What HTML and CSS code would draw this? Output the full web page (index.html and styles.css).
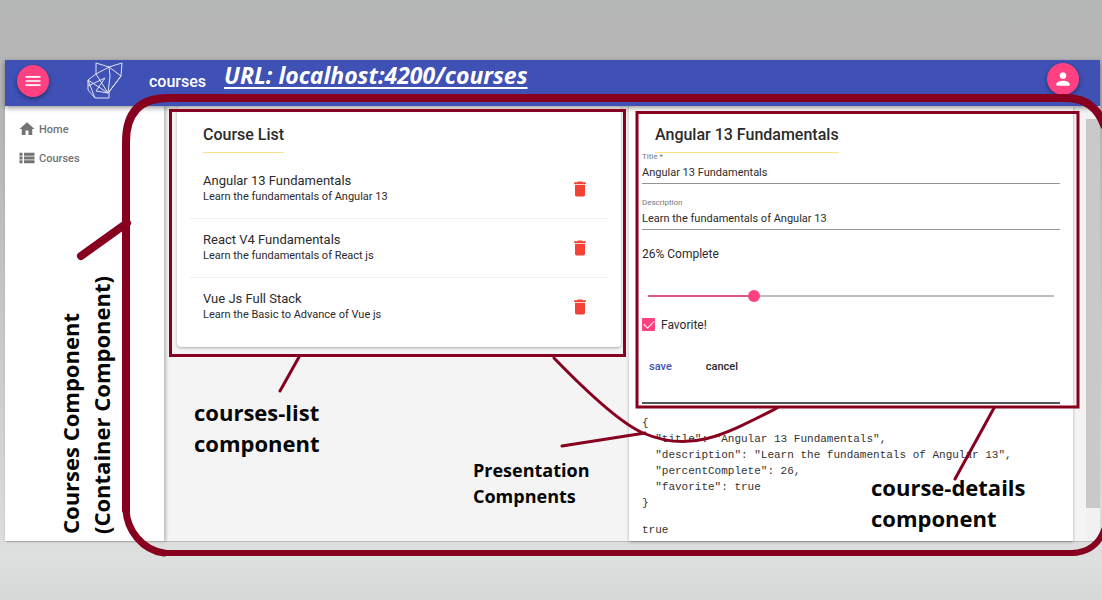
FILE: index.html
```html
<!DOCTYPE html>
<html lang="en">
<head>
<meta charset="utf-8">
<title>Courses</title>
<link rel="stylesheet" href="styles.css">
</head>
<body>
<div class="stage">
  <div class="app">
    <header class="toolbar">
      <button class="fab" type="button" aria-label="Menu">
        <svg viewBox="0 0 24 24" width="20" height="20"><path fill="currentColor" d="M3 18h18v-2H3v2zm0-5h18v-2H3v2zm0-7v2h18V6H3z"/></svg>
      </button>
      <svg class="logo" viewBox="0 0 36 38" width="36" height="38" fill="none" stroke="#dfe3f7" stroke-width="1" stroke-linejoin="round">
        <path d="M9 1 22 5 35 1 34 14 22 30 22 36 8 36 1 28 1 18 9 12Z"/>
        <path d="M9 12 22 5 34 14M22 5 23 14 21 31M9 12 21 31 1 18M34 14 21 31M1 18 8 36M1 24 18 16M21 31 9 29 18 16"/>
      </svg>
      <span class="page-name">courses</span>
      <a class="url" href="#">URL: localhost:4200/courses</a>
      <button class="fab fab-end" type="button" aria-label="Account">
        <svg viewBox="0 0 24 24" width="20" height="20"><path fill="currentColor" d="M12 12c2.210 0 4-1.790 4-4s-1.790-4-4-4-4 1.790-4 4 1.790 4 4 4zm0 2c-2.670 0-8 1.340-8 4v2h16v-2c0-2.660-5.330-4-8-4z"/></svg>
      </button>
    </header>
    <div class="body">
      <nav class="sidebar">
        <a class="nav-link" href="#"><svg viewBox="0 0 24 24" width="18" height="18"><path fill="currentColor" d="M10 20v-6h4v6h5v-8h3L12 3 2 12h3v8z"/></svg>Home</a>
        <a class="nav-link" href="#"><svg viewBox="0 0 24 24" width="18" height="18"><path fill="currentColor" d="M2 5h4v4H2zM8 5h14v4H8zM2 10h4v4H2zM8 10h14v4H8zM2 15h4v4H2zM8 15h14v4H8z"/></svg>Courses</a>
      </nav>
      <main class="content">
        <section class="card list-card">
          <h2 class="card-title">Course List</h2>
          <ul class="courses">
            <li class="course">
              <div class="course-text"><h3 class="course-name">Angular 13 Fundamentals</h3><p class="course-desc">Learn the fundamentals of Angular 13</p></div>
              <button class="delete" type="button" aria-label="Delete Angular 13 Fundamentals"><svg viewBox="0 0 24 24" width="20" height="20"><path fill="currentColor" d="M6 19c0 1.100.9 2 2 2h8c1.100 0 2-.9 2-2V7H6v12zM19 4h-3.500l-1-1h-5l-1 1H5v2h14V4z"/></svg></button>
            </li>
            <li class="course">
              <div class="course-text"><h3 class="course-name">React V4 Fundamentals</h3><p class="course-desc">Learn the fundamentals of React js</p></div>
              <button class="delete" type="button" aria-label="Delete React V4 Fundamentals"><svg viewBox="0 0 24 24" width="20" height="20"><path fill="currentColor" d="M6 19c0 1.100.9 2 2 2h8c1.100 0 2-.9 2-2V7H6v12zM19 4h-3.500l-1-1h-5l-1 1H5v2h14V4z"/></svg></button>
            </li>
            <li class="course">
              <div class="course-text"><h3 class="course-name">Vue Js Full Stack</h3><p class="course-desc">Learn the Basic to Advance of Vue js</p></div>
              <button class="delete" type="button" aria-label="Delete Vue Js Full Stack"><svg viewBox="0 0 24 24" width="20" height="20"><path fill="currentColor" d="M6 19c0 1.100.9 2 2 2h8c1.100 0 2-.9 2-2V7H6v12zM19 4h-3.500l-1-1h-5l-1 1H5v2h14V4z"/></svg></button>
            </li>
          </ul>
        </section>
        <section class="card detail-card">
          <h2 class="card-title">Angular 13 Fundamentals</h2>
          <form class="form">
            <div class="field">
              <label for="title">Title *</label>
              <input id="title" type="text" value="Angular 13 Fundamentals">
            </div>
            <div class="field">
              <label for="description">Description</label>
              <input id="description" type="text" value="Learn the fundamentals of Angular 13">
            </div>
            <label class="percent" for="percent">26% Complete</label>
            <input class="slider" id="percent" type="range" min="0" max="100" value="26">
            <label class="favorite"><input class="check" type="checkbox" checked>Favorite!</label>
            <div class="actions">
              <button class="action primary" type="button">save</button>
              <button class="action" type="button">cancel</button>
            </div>
          </form>
          <pre class="json">{
  "title": "Angular 13 Fundamentals",
  "description": "Learn the fundamentals of Angular 13",
  "percentComplete": 26,
  "favorite": true
}</pre>
          <pre class="json">true</pre>
        </section>
      </main>
      <div class="scrollbar"><div class="scroll-thumb"></div></div>
    </div>
  </div>

  <svg class="marks" viewBox="0 0 1102 600" width="1102" height="600" fill="none" stroke="#87001f" stroke-linecap="round">
    <path stroke-width="8" d="M1104 125Q1094 98 1066 98H168Q126 98 126 142V510"/>
    <path stroke-width="7" d="M126 510C127 530 142 550 164 553"/>
    <path stroke-width="6" d="M164 553H1072Q1096 552 1104 530"/>
    <path stroke-width="8" d="M81 256 127 223"/>
    <g stroke-width="3">
      <path stroke-linecap="butt" d="M170.500 110.500H624.500V355.500H170.500Z"/>
      <path stroke-linecap="butt" d="M637 112.500H1078V407H637Z"/>
      <path d="M299 357 280 391M994 408 955 479M562 446 645 433"/>
      <path d="M554 358C584 389 618 422 643 433C690 453 722 436 777 408"/>
    </g>
  </svg>
  <p class="note note-container">Courses Component<br>(Container Component)</p>
  <p class="note note-list">courses-list<br>component</p>
  <p class="note note-presentation">Presentation<br>Compnents</p>
  <p class="note note-details">course-details<br>component</p>
</div>
</body>
</html>
```
FILE: styles.css
```css
* {
  box-sizing: border-box;
}

body {
  margin: 0;
  font-family: Roboto, "Liberation Sans", sans-serif;
  font-size: 12px;
  color: #2b2b2b;
}

h2, h3, p, ul, pre {
  margin: 0;
  padding: 0;
}

button {
  border: 0;
  padding: 0;
  background: none;
  font: inherit;
  color: inherit;
}

.stage {
  position: relative;
  min-height: 100vh;
  padding: 60px 2px 58px 5px;
  overflow: hidden;
  background: linear-gradient(#b4b6b5 0, #b4b5b4 120px, #d6d6d6 480px, #dedfdf 560px, #d6d7d7 600px);
}

.app {
  border-bottom: 1px solid #bbb;
}

.toolbar {
  position: relative;
  z-index: 1;
  display: flex;
  align-items: center;
  height: 46px;
  padding: 0 21px 4px 12px;
  background: #3f51b5;
  color: #fff;
  box-shadow: 0 2px 5px rgba(0, 0, 0, 0.4);
}

.fab {
  display: grid;
  place-items: center;
  width: 32px;
  height: 32px;
  border-radius: 50%;
  background: #ff4081;
  box-shadow: 0 2px 5px rgba(0, 0, 0, 0.4);
}

.fab-end {
  margin: 0 0 4px auto;
}

.logo {
  margin: 0 26px 0 38px;
}

.page-name {
  font-size: 16px;
  font-weight: 500;
}

.url {
  margin: 0 0 12px 18px;
  font: italic bold 23px/30px "Open Sans", "Noto Sans", sans-serif;
  color: #fff;
  text-decoration-thickness: 2px;
  text-underline-offset: 3px;
}

.body {
  display: flex;
  background: #f4f4f4;
}

.sidebar {
  width: 160px;
  padding: 14px 13px;
  background: #fff;
  border-right: 1px solid #c4c6c8;
  box-shadow: 1px 0 3px rgba(0, 0, 0, 0.25);
}

.nav-link {
  display: flex;
  align-items: center;
  gap: 3px;
  height: 18px;
  margin-bottom: 11px;
  font-size: 11px;
  font-weight: 500;
  color: #737373;
  text-decoration: none;
}

.content {
  flex: 1;
  display: grid;
  grid-template-columns: 1fr 1fr;
  align-items: start;
  gap: 8px;
  padding: 0 13px 0 12px;
}

.card {
  background: #fff;
  box-shadow: 0 1px 3px rgba(0, 0, 0, 0.3);
}

.card-title {
  width: max-content;
  height: 47px;
  margin-left: 26px;
  padding-top: 19px;
  border-bottom: 1px solid #fbe08a;
  font-size: 16px;
  line-height: 20px;
  font-weight: 500;
}

.list-card {
  padding-bottom: 11px;
  border-radius: 4px;
}

.courses {
  margin: 6px 13px 0;
  list-style: none;
}

.course {
  display: flex;
  align-items: center;
  justify-content: space-between;
  height: 59px;
  padding: 0 18px 0 13px;
}

.course + .course {
  border-top: 1px solid #efefef;
}

.course-name {
  font-size: 13px;
  line-height: 16px;
  font-weight: 400;
}

.course-desc {
  font-size: 11px;
  line-height: 16px;
}

.delete {
  display: flex;
  color: #f44336;
}

.detail-card {
  padding: 0 13px;
}

.detail-card .card-title {
  margin-left: 13px;
}

.form {
  display: flex;
  flex-direction: column;
  padding-bottom: 25px;
  border-bottom: 2px solid #555;
}

.field {
  height: 31px;
  margin-bottom: 15px;
  border-bottom: 1px solid #949494;
}

.field label {
  display: block;
  font-size: 8px;
  line-height: 8px;
  color: #777;
}

.field input {
  display: block;
  width: 100%;
  height: 22px;
  padding: 0;
  border: 0;
  outline: 0;
  background: none;
  font: inherit;
  font-size: 11px;
  color: inherit;
}

.percent {
  line-height: 18px;
}

.slider {
  width: 100%;
  height: 12px;
  margin: 27px 0 16px;
  appearance: none;
  background: none;
}

.slider::-webkit-slider-runnable-track {
  height: 12px;
  background: linear-gradient(to right, transparent 6px, #e0558b 6px, #e0558b 26%, #bdbdbd 26%, #bdbdbd calc(100% - 6px), transparent calc(100% - 6px)) center / 100% 2px no-repeat;
}

.slider::-webkit-slider-thumb {
  appearance: none;
  width: 12px;
  height: 12px;
  border-radius: 50%;
  background: #ff4081;
}

.favorite {
  display: flex;
  align-items: center;
  gap: 6px;
  height: 13px;
}

.check {
  display: grid;
  place-items: center;
  width: 13px;
  height: 13px;
  margin: 0;
  appearance: none;
  border-radius: 1px;
  background: #ff4081;
}

.check:checked::before {
  content: "";
  width: 9px;
  height: 5px;
  margin-bottom: 3px;
  border: solid #fff;
  border-width: 0 0 1px 1px;
  transform: rotate(-45deg);
}

.actions {
  display: flex;
  gap: 34px;
  margin-top: 26px;
  padding-left: 7px;
}

.action {
  font-size: 11px;
  font-weight: 500;
  line-height: 20px;
}

.primary {
  color: #3f51b5;
}

.json {
  margin: 11px 0;
  font: 11px/16px "Liberation Mono", monospace;
  color: #333;
}

.json:last-child {
  margin-bottom: 3px;
}

.scrollbar {
  width: 14px;
  padding: 13px 0 33px;
  background: #f1f1f1;
}

.scroll-thumb {
  height: 100%;
  background: #c9c9c9;
}

.marks {
  position: absolute;
  z-index: 2;
  top: 0;
  left: 0;
  pointer-events: none;
}

.note {
  position: absolute;
  z-index: 3;
  font: bold 22px/31px "Open Sans", "Noto Sans", sans-serif;
  color: #050505;
  white-space: nowrap;
}

.note-container {
  left: 55px;
  bottom: 66px;
  writing-mode: vertical-rl;
  transform: rotate(180deg);
}

.note-list {
  left: 194px;
  top: 397px;
}

.note-presentation {
  left: 473px;
  top: 457px;
  font-size: 18px;
  line-height: 26px;
}

.note-details {
  left: 871px;
  top: 472px;
}
```
